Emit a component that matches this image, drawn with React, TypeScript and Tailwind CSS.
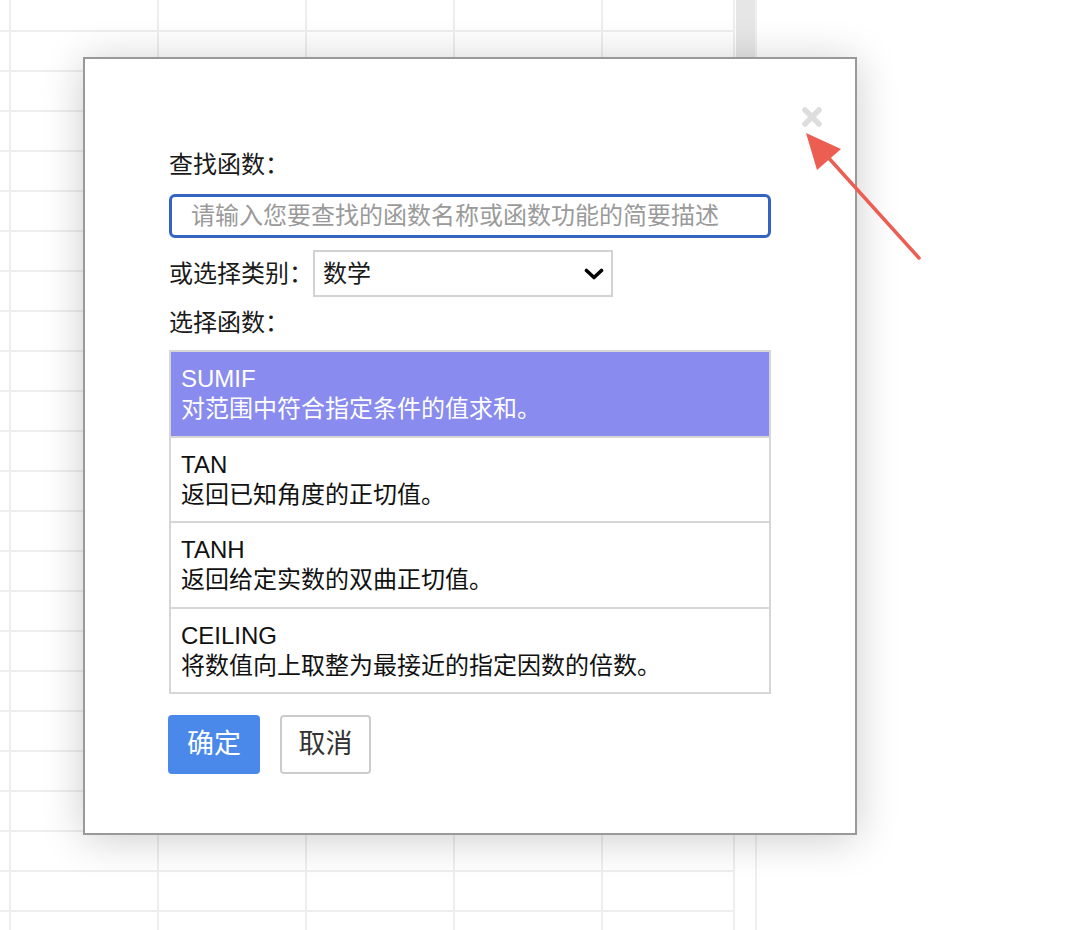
import React from 'react';

const FONT = '"Liberation Sans", "Noto Sans CJK SC", sans-serif';

const rows = Array.from({ length: 25 });
const cols = [
  'w-[11px]',
  'w-[148px]',
  'w-[148px]',
  'w-[148px]',
  'w-[148px]',
  'w-[132px]',
];

const functions = [
  { name: 'SUMIF', desc: '对范围中符合指定条件的值求和。' },
  { name: 'TAN', desc: '返回已知角度的正切值。' },
  { name: 'TANH', desc: '返回给定实数的双曲正切值。' },
  { name: 'CEILING', desc: '将数值向上取整为最接近的指定因数的倍数。' },
];

function SheetBackground() {
  return (
    <div className="flex h-[930px] overflow-hidden">
      {/* cells */}
      <div className="flex flex-col">
        {rows.map((_, r) => (
          <div key={r} className="flex">
            {cols.map((w, c) => (
              <div
                key={c}
                className={`${w} ${r === 0 ? 'h-[32px]' : 'h-[40px]'} shrink-0 border-r-2 border-b-2 border-[#eeeeee]`}
              />
            ))}
          </div>
        ))}
      </div>
      {/* scrollbar */}
      <div className="w-[22px] shrink-0 flex border-r-2 border-[#efefef]">
        <div className="ml-[1px] w-[19px] h-[420px] bg-[#e6e6e6]" />
      </div>
      <div className="flex-1" />
    </div>
  );
}

function CloseIcon() {
  return (
    <svg width="22" height="22" viewBox="0 0 22 22">
      <path d="M4 4 L18 18 M18 4 L4 18" stroke="#dddddd" strokeWidth="5.5" strokeLinecap="round" />
    </svg>
  );
}

function ChevronIcon() {
  return (
    <svg width="20" height="12" viewBox="0 0 20 12">
      <path d="M2.5 2.5 L10 9.5 L17.5 2.5" fill="none" stroke="#000" strokeWidth="3.6" strokeLinecap="round" strokeLinejoin="round" />
    </svg>
  );
}

function FunctionDialog() {
  return (
    <div className="absolute left-[83px] top-[57px] w-[774px] h-[778px] bg-white border-2 border-[#999999] shadow-[0_4px_40px_rgba(0,0,0,0.2)]">
      <button className="absolute left-[716px] top-[47px]">
        <CloseIcon />
      </button>

      <div className="px-[84px] pt-[90px] text-[24px] text-[#1a1a1a]">
        <div className="leading-[32px]">查找函数：</div>

        <input
          placeholder="请输入您要查找的函数名称或函数功能的简要描述"
          className="mt-[13px] w-full h-[44px] border-[3px] border-[#3463c2] rounded-[6px] pl-[19px] text-[24px] outline-none placeholder:text-[#9a9a9a]"
          style={{ fontFamily: FONT }}
        />

        <div className="mt-[12px] flex items-center">
          <span className="leading-[32px]">或选择类别：</span>
          <div className="w-[300px] h-[47px] border-2 border-[#d2d2d2] flex items-center justify-between pl-[8px] pr-[7px]">
            <span>数学</span>
            <ChevronIcon />
          </div>
        </div>

        <div className="mt-[10px] leading-[32px]">选择函数：</div>

        <div className="mt-[11px] border-2 border-[#d6d6d6] flex flex-col">
          {functions.map((f, i) => (
            <div
              key={f.name}
              className={`pl-[10px] pr-[10px] pt-[12px] pb-[11.5px] leading-[30px] ${i > 0 ? 'border-t-2 border-[#d6d6d6]' : ''} ${i === 0 ? 'bg-[#898bee] text-white' : 'text-[#111111]'}`}
            >
              <div>{f.name}</div>
              <div>{f.desc}</div>
            </div>
          ))}
        </div>

        <div className="mt-[21px] flex gap-[20px] -ml-[1px]">
          <button className="w-[92px] h-[59px] rounded-[4px] bg-[#4a89ea] text-white text-[27px]">确定</button>
          <button className="w-[91px] h-[59px] rounded-[4px] border-2 border-[#cccccc] bg-white text-[#333333] text-[27px]">取消</button>
        </div>
      </div>
    </div>
  );
}

function Annotation() {
  return (
    <svg className="absolute left-0 top-0 pointer-events-none" width="1068" height="930">
      <line x1="919" y1="258" x2="826" y2="155" stroke="#ec5d52" strokeWidth="3.5" strokeLinecap="round" />
      <polygon points="806,133 841,149 817,170" fill="#ec5d52" />
    </svg>
  );
}

export default function App() {
  return (
    <div className="relative w-[1068px] h-[930px] bg-white overflow-hidden" style={{ fontFamily: FONT }}>
      <SheetBackground />
      <FunctionDialog />
      <Annotation />
    </div>
  );
}
